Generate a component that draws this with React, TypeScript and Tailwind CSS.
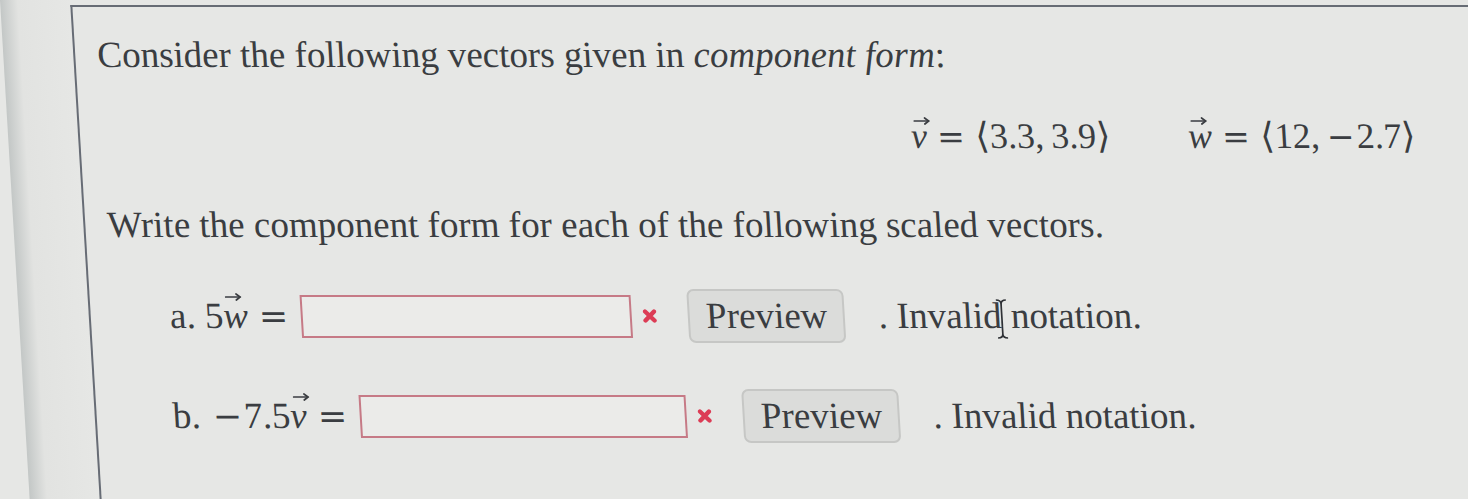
import React from "react";

const serif = { fontFamily: '"Liberation Serif", "Times New Roman", serif' };
const opFont = { fontFamily: '"DejaVu Serif", "Liberation Serif", serif' };

function Vec({ letter, arrowTop = "top-[-1px]" }: { letter: string; arrowTop?: string }) {
  return (
    <span className="relative inline-block italic">
      <svg
        className={`absolute left-[3px] ${arrowTop}`}
        width="17"
        height="10"
        viewBox="0 0 17 10"
        fill="none"
        stroke="#3a3d41"
        strokeWidth="1.7"
        strokeLinecap="round"
      >
        <path d="M1 6 H15" />
        <path d="M11.5 3 L15.5 6 L11.5 9" />
      </svg>
      {letter}
    </span>
  );
}

// operators in DejaVu: wider, closer to the TeX glyphs
function Op({ children, className = "" }: { children: React.ReactNode; className?: string }) {
  return (
    <span className={`font-light ${className}`} style={opFont}>
      {children}
    </span>
  );
}

function Cross() {
  return (
    <svg width="14" height="14" viewBox="0 0 14 14" className="shrink-0">
      <path d="M2.5 2.5 L11.5 11.5 M11.5 2.5 L2.5 11.5" stroke="#dc3c55" strokeWidth="4.4" strokeLinecap="round" />
    </svg>
  );
}

function IBeam() {
  return (
    <svg
      className="absolute left-[-7px] top-[-30px]"
      width="14"
      height="42"
      viewBox="0 0 14 42"
      fill="none"
      stroke="#2f3236"
      strokeWidth="1.7"
    >
      <path d="M2 2 Q7 2 7 6 Q7 2 12 2" />
      <path d="M7 6 V36" />
      <path d="M2 40 Q7 40 7 36 Q7 40 12 40" />
    </svg>
  );
}

function AnswerRow({
  label,
  inputWidth,
  cursor,
}: {
  label: React.ReactNode;
  inputWidth: string;
  cursor?: boolean;
}) {
  return (
    <div className="flex items-center h-[54px]">
      <div className="flex items-center text-[37px] whitespace-nowrap" style={serif}>
        {label}
      </div>
      <div className={`ml-[13px] h-[43px] border-2 border-[#c67a86] bg-[#ebebe9] ${inputWidth}`} />
      <div className="ml-[11px]">
        <Cross />
      </div>
      <button
        className="ml-[31px] h-[54px] w-[157px] rounded-[7px] border-2 border-[#c6c7c5] bg-[#dbdcda] text-[37px] leading-[48px] text-[#3a3d41]"
        style={serif}
      >
        Preview
      </button>
      <div className="ml-[33px] text-[37px] whitespace-nowrap" style={serif}>
        . Invalid
        {cursor && (
          <span className="relative inline-block w-0">
            <IBeam />
          </span>
        )}{" "}
        notation.
      </div>
    </div>
  );
}

export default function App() {
  return (
    <div className="w-[1468px] h-[499px] overflow-hidden bg-[#e6e7e5] text-[#3a3d41]" style={serif}>
      <div className="flex h-[520px] origin-top-left skew-x-[3.4deg]">
        <div className="w-[70px] shrink-0 bg-gradient-to-r from-[#c3c7c6] via-[#e2e3e1] via-25% to-[#e6e7e5]" />
        <div className="flex-1 mt-[5px] border-l-2 border-t-2 border-[#676c75] pl-[22px]">
          <p className="mt-[28px] h-[40px] leading-[40px] text-[37px] whitespace-nowrap">
            Consider the following vectors given in <i>component form</i>:
          </p>

          <div className="mt-[41px] h-[40px] leading-[40px] flex items-center ml-[809px] text-[36px] whitespace-nowrap">
            <span>
              <Vec letter="v" />
              <Op className="ml-[10px] mr-[11px] text-[33px]">=</Op>
              ⟨3.3,&thinsp;3.9⟩
            </span>
            <span className="ml-[78px]">
              <Vec letter="w" />
              <Op className="ml-[10px] mr-[11px] text-[33px]">=</Op>
              ⟨12,&thinsp;
              <Op className="mr-[2px] text-[33px]">−</Op>
              2.7⟩
            </span>
          </div>

          <p className="mt-[49px] h-[40px] leading-[40px] text-[37px] whitespace-nowrap">
            Write the component form for each of the following scaled vectors.
          </p>

          <div className="mt-[44px] ml-[57px]">
            <AnswerRow
              label={
                <>
                  a.&nbsp;5<Vec letter="w" arrowTop="top-[3px]" />
                  <Op className="ml-[11px] text-[35px]">=</Op>
                </>
              }
              inputWidth="w-[331px]"
              cursor
            />
          </div>

          <div className="mt-[46px] ml-[54px]">
            <AnswerRow
              label={
                <>
                  b.&nbsp;<Op className="ml-[3px] mr-[2px] text-[35px]">−</Op>7.5
                  <Vec letter="v" arrowTop="top-[3px]" />
                  <Op className="ml-[11px] text-[35px]">=</Op>
                </>
              }
              inputWidth="w-[327px]"
            />
          </div>
        </div>
      </div>
    </div>
  );
}
